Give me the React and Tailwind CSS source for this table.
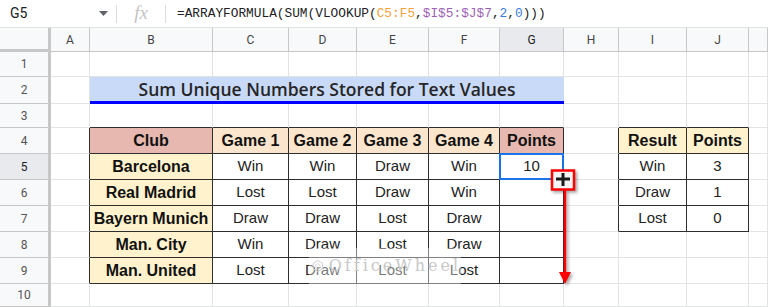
import React from 'react';

const colWidths = [51, 39, 123, 76, 68, 72, 71, 64, 55, 68, 62, 19];
const rowHeights = [24, 25, 27, 24, 26, 26, 26, 26, 26, 26, 23];
const letters = ['', 'A', 'B', 'C', 'D', 'E', 'F', 'G', 'H', 'I', 'J', ''];

const clubs = [
  ['Barcelona', 'Win', 'Win', 'Draw', 'Win', '10'],
  ['Real Madrid', 'Lost', 'Lost', 'Draw', 'Win', ''],
  ['Bayern Munich', 'Draw', 'Draw', 'Lost', 'Draw', ''],
  ['Man. City', 'Win', 'Draw', 'Lost', 'Draw', ''],
  ['Man. United', 'Lost', 'Draw', 'Lost', 'Lost', ''],
];
const results = [
  ['Win', '3'],
  ['Draw', '1'],
  ['Lost', '0'],
];

const inMain = (r, c) => r >= 4 && r <= 9 && c >= 2 && c <= 7;
const inRes = (r, c) => r >= 4 && r <= 7 && c >= 9 && c <= 10;
const inTable = (r, c) => inMain(r, c) || inRes(r, c);

function cellContent(r, c) {
  // header row of both tables
  if (r === 4) {
    if (c === 2) return { text: 'Club', bold: true, bg: 'bg-[#e6b8af]' };
    if (c >= 3 && c <= 6) return { text: `Game ${c - 2}`, bold: true, bg: 'bg-[#fce5cd]' };
    if (c === 7) return { text: 'Points', bold: true, bg: 'bg-[#e6b8af]' };
    if (c === 9) return { text: 'Result', bold: true, bg: 'bg-[#fff2cc]' };
    if (c === 10) return { text: 'Points', bold: true, bg: 'bg-[#fff2cc]' };
  }
  if (r >= 5 && r <= 9 && c >= 2 && c <= 7) {
    const row = clubs[r - 5];
    if (c === 2) return { text: row[0], bold: true, bg: 'bg-[#fff2cc]' };
    return { text: row[c - 2], bold: false, bg: 'bg-white' };
  }
  if (r >= 5 && r <= 7 && (c === 9 || c === 10)) {
    return { text: results[r - 5][c - 9], bold: false, bg: 'bg-white' };
  }
  return null;
}

function Cell({ r, c }) {
  const darkR = inTable(r, c) || inTable(r, c + 1);
  const darkB = inTable(r, c) || inTable(r + 1, c);
  const content = cellContent(r, c);
  const selected = r === 5 && c === 7;
  return (
    <div
      className={`relative flex items-center justify-center border-r border-b ${
        darkR ? 'border-r-[#2e2e2e]' : 'border-r-[#e2e3e3]'
      } ${darkB ? 'border-b-[#2e2e2e]' : 'border-b-[#e2e3e3]'} ${content ? content.bg : 'bg-white'}`}
    >
      {content && (
        <span
          className={`font-['Liberation_Sans',Arial,sans-serif] whitespace-nowrap ${
            content.bold ? 'font-bold text-[16px] text-[#111]' : 'text-[15px] text-[#222]'
          }`}
        >
          {content.text}
        </span>
      )}
      {selected && (
        <div className="absolute -left-px -top-px right-[-1px] bottom-[-1px] border-2 border-[#1a73e8]" />
      )}
    </div>
  );
}

function FormulaBar() {
  return (
    <div className="flex h-[28px] items-center border-b border-[#e1e3e1] bg-white">
      <div className="flex w-[116px] items-center justify-between pl-[10px] pr-[8px]">
        <span className="font-['Roboto',sans-serif] text-[14px] text-[#202124]">G5</span>
        <svg width="9" height="5" viewBox="0 0 9 5">
          <path d="M0 0h9L4.5 5z" fill="#5f6368" />
        </svg>
      </div>
      <div className="h-[18px] w-px bg-[#dadce0]" />
      <div className="flex w-[48px] items-center justify-center">
        <span className="font-['Liberation_Serif',serif] text-[19px] italic text-[#c4c4c4]">fx</span>
      </div>
      <div className="h-[18px] w-px bg-[#dadce0]" />
      <div className="ml-[11px] font-['Liberation_Mono',monospace] text-[12.8px] text-[#202124]">
        =ARRAYFORMULA(SUM(VLOOKUP(
        <span className="text-[#f6a23c]">C5:F5</span>,
        <span className="text-[#9e5fb8]">$I$5:$J$7</span>,
        <span className="text-[#3a7be0]">2</span>,
        <span className="text-[#3a7be0]">0</span>)))
      </div>
    </div>
  );
}

function Sheet() {
  const cells = [];
  rowHeights.forEach((_, r) => {
    colWidths.forEach((__, c) => {
      const key = `${r}-${c}`;
      if (r === 0) {
        if (c === 0) {
          cells.push(
            <div key={key} className="border-r-[3px] border-b-[3px] border-[#c7c7c7] bg-[#f8f9fa]" />
          );
        } else {
          cells.push(
            <div
              key={key}
              className={`flex items-center justify-center border-r border-b border-[#c7c7c7] font-['Roboto',sans-serif] text-[12px] ${
                c === 7 ? 'bg-[#e8eaed] text-[#202124]' : 'bg-[#f8f9fa] text-[#444]'
              }`}
            >
              {letters[c]}
            </div>
          );
        }
        return;
      }
      if (c === 0) {
        cells.push(
          <div
            key={key}
            className={`flex items-center justify-center border-r-[3px] border-b border-r-[#c7c7c7] border-b-[#c7c7c7] font-['Roboto',sans-serif] text-[12px] ${
              r === 5 ? 'bg-[#e8eaed] text-[#202124]' : 'bg-[#f8f9fa] text-[#555]'
            }`}
          >
            {r}
          </div>
        );
        return;
      }
      // merged title B2:G2
      if (r === 2 && c === 2) {
        cells.push(
          <div
            key={key}
            className="col-span-6 flex items-center justify-center border-b-[3px] border-b-[#0000ff] bg-[#c9daf8]"
          >
            <span className="font-['Open_Sans',sans-serif] text-[17.5px] font-semibold text-[#262626]">
              Sum Unique Numbers Stored for Text Values
            </span>
          </div>
        );
        return;
      }
      if (r === 2 && c > 2 && c <= 7) return;
      cells.push(<Cell key={key} r={r} c={c} />);
    });
  });

  return (
    <div className="grid grid-cols-[51px_39px_123px_76px_68px_72px_71px_64px_55px_68px_62px_19px] grid-rows-[24px_25px_27px_24px_26px_26px_26px_26px_26px_26px_23px]">
      {cells}
    </div>
  );
}

export default function App() {
  return (
    <div className="relative h-[307px] w-[768px] overflow-hidden bg-white">
      <FormulaBar />
      <Sheet />

      {/* watermark */}
      <div className="absolute left-[309px] top-[248px] flex h-[36px] w-[152px] items-center gap-[5px] bg-white/40 pl-[3px]">
        <svg width="30" height="32" viewBox="0 0 30 32">
          <path d="M15 2l12 7v14l-12 7-12-7V9z" fill="none" stroke="#cfcfcf" strokeWidth="2.5" />
          <path d="M15 10l6 3.5v7L15 24l-6-3.5v-7z" fill="none" stroke="#d6d6d6" strokeWidth="2" />
        </svg>
        <span className="font-['DejaVu_Serif',serif] text-[16px] tracking-[3px] text-[#c8c8c8]">OfficeWheel</span>
      </div>

      {/* fill handle highlight and drag arrow */}
      <svg
        className="pointer-events-none absolute left-0 top-0 drop-shadow-[2px_2px_1.5px_rgba(0,0,0,0.35)]"
        width="768"
        height="307"
        viewBox="0 0 768 307"
      >
        <rect x="552" y="170.5" width="22" height="19" fill="#f4f4f4" stroke="#ff0000" strokeWidth="2.5" />
        <path d="M556 179h14M563 173v13" stroke="#1a1a1a" strokeWidth="3" />
        <line x1="565" y1="190" x2="565" y2="274" stroke="#ff0000" strokeWidth="2.5" />
        <path d="M559 272h12l-6 12z" fill="#ff0000" />
      </svg>
    </div>
  );
}
